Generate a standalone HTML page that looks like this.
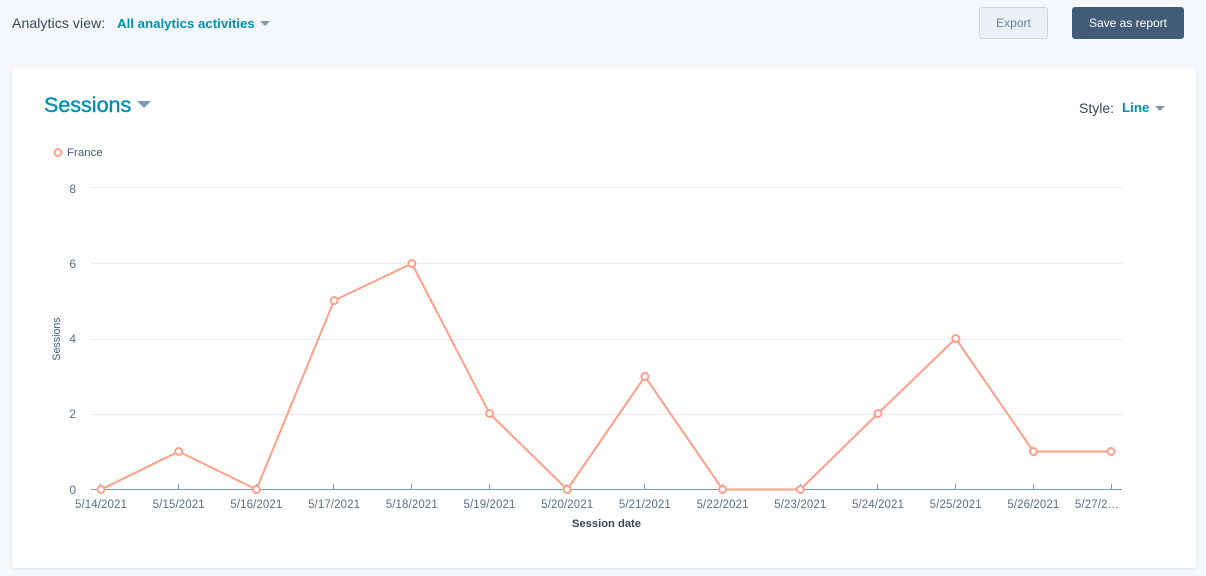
<!DOCTYPE html>
<html>
<head>
<meta charset="utf-8">
<style>
html,body{margin:0;padding:0;width:1206px;height:576px;overflow:hidden;background:#f5f8fa;font-family:"Liberation Sans",sans-serif;color:#33475b}
.abs{position:absolute;white-space:nowrap}
.card{position:absolute;left:12px;top:67px;width:1184px;height:501px;background:#fff;border-radius:3px;box-shadow:0 1px 3px rgba(45,62,80,.12)}
.btn{position:absolute;top:7px;height:32px;box-sizing:border-box;border-radius:3px;font-size:12px;text-align:center}
.car{position:absolute;width:0;height:0;border-left:5px solid transparent;border-right:5px solid transparent;border-top:5px solid #7c98b6}
svg{position:absolute;left:0;top:0}
</style>
</head>
<body>
<div class="abs" style="left:12px;top:15px;font-size:14px;line-height:17px;color:#33475b;letter-spacing:.1px">Analytics view:</div>
<div class="abs" style="left:117px;top:15px;font-size:13.3px;line-height:17px;color:#0091ae;font-weight:bold;letter-spacing:-.02px">All analytics activities</div>
<div class="car" style="left:260px;top:21px;border-left-width:5px;border-right-width:5px;border-top-width:5px"></div>
<div class="btn" style="left:979px;width:69px;background:#eaf0f6;border:1px solid #cbd6e2;color:#668099;line-height:31px">Export</div>
<div class="btn" style="left:1072px;width:112px;background:#425b76;color:#fff;line-height:33px">Save as report</div>
<div class="card"></div>
<div class="abs" style="left:44px;top:92px;font-size:21.5px;line-height:26px;color:#0091ae;-webkit-text-stroke:.45px #0091ae;letter-spacing:0">Sessions</div>
<div class="car" style="left:137px;top:101px;border-left-width:7px;border-right-width:7px;border-top-width:7px"></div>
<div class="abs" style="left:1079px;top:100px;font-size:14px;line-height:16px">Style:</div>
<div class="abs" style="left:1122px;top:100px;font-size:13.3px;line-height:16px;color:#0091ae;font-weight:bold">Line</div>
<div class="car" style="left:1155px;top:106px;border-left-width:5px;border-right-width:5px;border-top-width:5px"></div>
<svg width="1206" height="576" viewBox="0 0 1206 576" font-family="'Liberation Sans',sans-serif">
<g stroke="#e3e6ea" stroke-width="1" stroke-dasharray="3 1">
<path d="M91 187.5H1122M91 263.5H1122M91 339.5H1122M91 414.5H1122"/>
</g>
<path d="M91 489.5H1122" stroke="#7c98b6" stroke-width="1"/>
<path d="M100.5 484V490M178.5 484V490M256.5 484V490M333.5 484V490M411.5 484V490M489.5 484V490M566.5 484V490M644.5 484V490M722.5 484V490M800.5 484V490M877.5 484V490M955.5 484V490M1033.5 484V490M1111.5 484V490" stroke="#7c98b6" stroke-width="1"/>
<polyline fill="none" stroke="#ff9f8a" stroke-width="2" stroke-linejoin="round" points="101,489.5 178.7,451.5 256.4,489.5 334.1,300.5 411.8,263.5 489.5,413.5 567.2,489.5 644.9,376.5 722.6,489.5 800.3,489.5 878,413.5 955.7,338.5 1033.4,451.5 1111,451.5"/>
<g fill="#fff" stroke="#ff9f8a" stroke-width="2">
<circle cx="101" cy="489.5" r="3.5"/><circle cx="178.7" cy="451.5" r="3.5"/><circle cx="256.4" cy="489.5" r="3.5"/><circle cx="334.1" cy="300.5" r="3.5"/><circle cx="411.8" cy="263.5" r="3.5"/><circle cx="489.5" cy="413.5" r="3.5"/><circle cx="567.2" cy="489.5" r="3.5"/><circle cx="644.9" cy="376.5" r="3.5"/><circle cx="722.6" cy="489.5" r="3.5"/><circle cx="800.3" cy="489.5" r="3.5"/><circle cx="878" cy="413.5" r="3.5"/><circle cx="955.7" cy="338.5" r="3.5"/><circle cx="1033.4" cy="451.5" r="3.5"/><circle cx="1111" cy="451.5" r="3.5"/>
<circle cx="58" cy="152.5" r="3.5"/>
</g>
<text x="67" y="156" font-size="11.3" fill="#425b76" letter-spacing=".1">France</text>
<g font-size="12" fill="#5a6f85" text-anchor="end">
<text x="76" y="193">8</text><text x="76" y="268">6</text><text x="76" y="343">4</text><text x="76" y="418">2</text><text x="76" y="494">0</text>
</g>
<text transform="translate(60,339) rotate(-90)" font-size="10.7" fill="#425b76" text-anchor="middle">Sessions</text>
<g font-size="11.5" fill="#5a6f85" text-anchor="middle" letter-spacing=".1">
<text x="101" y="508">5/14/2021</text><text x="178.7" y="508">5/15/2021</text><text x="256.4" y="508">5/16/2021</text><text x="334.1" y="508">5/17/2021</text><text x="411.8" y="508">5/18/2021</text><text x="489.5" y="508">5/19/2021</text><text x="567.2" y="508">5/20/2021</text><text x="644.9" y="508">5/21/2021</text><text x="722.6" y="508">5/22/2021</text><text x="800.3" y="508">5/23/2021</text><text x="878" y="508">5/24/2021</text><text x="955.7" y="508">5/25/2021</text><text x="1033.4" y="508">5/26/2021</text><text x="1097" y="508">5/27/2…</text>
</g>
<text x="606.5" y="527" font-size="11.2" font-weight="bold" fill="#33475b" text-anchor="middle">Session date</text>
</svg>
</body>
</html>
